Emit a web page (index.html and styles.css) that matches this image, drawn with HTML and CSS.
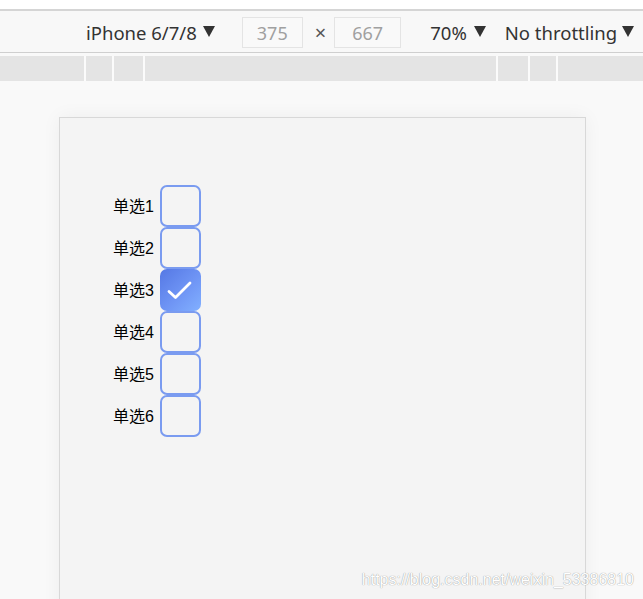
FILE: index.html
```html
<!DOCTYPE html>
<html>
<head>
<meta charset="utf-8">
<link rel="stylesheet" href="styles.css">
</head>
<body>
<div class="topstrip"></div>
<div class="toolbar">
  <span class="device">iPhone 6/7/8</span>
  <svg class="caret" width="12" height="11" viewBox="0 0 12 11"><path d="M0 0 H12 L6 11 Z" fill="#333"/></svg>
  <span class="dim">375</span>
  <span class="times">×</span>
  <span class="dim dim2">667</span>
  <span class="zoom">70%</span>
  <svg class="caret" width="12" height="11" viewBox="0 0 12 11"><path d="M0 0 H12 L6 11 Z" fill="#333"/></svg>
  <span class="throttle">No throttling</span>
  <svg class="caret" width="12" height="11" viewBox="0 0 12 11"><path d="M0 0 H12 L6 11 Z" fill="#333"/></svg>
</div>
<div class="ruler">
  <div class="seg" style="width:84px"></div>
  <div class="seg" style="width:26px"></div>
  <div class="seg" style="width:29px"></div>
  <div class="seg" style="width:351px"></div>
  <div class="seg" style="width:30px"></div>
  <div class="seg" style="width:26px"></div>
  <div class="seg grow"></div>
</div>
<div class="stage">
  <div class="frame">
    <div class="list">
      <div class="row"><span class="label">单选1</span><span class="box"></span></div>
      <div class="row"><span class="label">单选2</span><span class="box"></span></div>
      <div class="row"><span class="label">单选3</span><span class="box checked"><svg width="41" height="41" viewBox="0 0 41 41"><path d="M9 21.5 L15.5 27.5 L30 13" fill="none" stroke="#fff" stroke-width="2.8" stroke-linecap="round" stroke-linejoin="round"/></svg></span></div>
      <div class="row"><span class="label">单选4</span><span class="box"></span></div>
      <div class="row"><span class="label">单选5</span><span class="box"></span></div>
      <div class="row"><span class="label">单选6</span><span class="box"></span></div>
    </div>
  </div>
</div>
<div class="watermark">https://blog.csdn.net/weixin_53386810</div>
</body>
</html>
```
FILE: styles.css
```css
* { box-sizing: border-box; }
html, body { margin: 0; padding: 0; }
body {
  width: 643px;
  height: 599px;
  overflow: hidden;
  background: #f9f9f9;
  font-family: "Noto Sans", "Liberation Sans", sans-serif;
  position: relative;
}
.topstrip {
  height: 11px;
  background: #ffffff;
  border-bottom: 2px solid #d5d5d5;
}
.toolbar {
  height: 42px;
  background: #f8f8f8;
  border-bottom: 1px solid #cfcfcf;
  display: flex;
  align-items: center;
  font-size: 18.5px;
  color: #333;
  padding-left: 86px;
  padding-top: 2px;
  white-space: nowrap;
}
.caret { display: block; flex: none; margin-top: -2px; }
.device { margin-right: 6px; }
.dim {
  width: 61px;
  height: 31px;
  border: 1px solid #e4e4e4;
  background: #f9f9f9;
  color: #a0a0a0;
  display: flex;
  align-items: center;
  justify-content: center;
  font-size: 18px;
  margin-left: 27px;
}
.dim2 { width: 67px; margin-left: 0; }
.times { margin: 0 8px 0 12px; color: #555; font-size: 20px; }
.zoom { margin-left: 29px; margin-right: 7px; }
.throttle { margin-left: 19px; margin-right: 5px; }
.ruler {
  margin-top: 3px;
  height: 25px;
  display: flex;
  gap: 2px;
  background: #fbfbfb;
}
.seg { background: #e4e4e4; height: 25px; }
.grow { flex: 1; }
.stage {
  padding-top: 36px;
  padding-left: 59px;
}
.frame {
  width: 527px;
  height: 500px;
  background: #f4f4f4;
  border: 1px solid #d8d8d8;
  border-bottom: none;
  box-shadow: 0 0 18px rgba(0, 0, 0, 0.05);
  padding-top: 67px;
  padding-left: 40px;
}
.list { display: flex; flex-direction: column; }
.row {
  display: flex;
  align-items: center;
  height: 42px;
}
.label {
  width: 55px;
  text-align: right;
  padding-right: 1px;
  margin-right: 5px;
  margin-top: -2px;
  font-family: "Liberation Sans", "Noto Sans CJK SC", sans-serif;
  font-size: 16px;
  color: #000;
}
.box {
  width: 41px;
  height: 42px;
  border: 2px solid #7a9bf0;
  border-radius: 7px;
  background: #f4f4f4;
  display: flex;
  align-items: center;
  justify-content: center;
}
.box.checked {
  border: none;
  background: linear-gradient(135deg, #5578e4 0%, #6f95f5 55%, #82b0ff 100%);
}
.box svg { display: block; }
.watermark {
  position: absolute;
  right: 9px;
  bottom: 10px;
  font-family: "Liberation Sans", sans-serif;
  font-size: 16px;
  color: #ffffff;
  text-shadow: 0 0 1px rgba(0,0,0,0.35), 0 0 1px rgba(0,0,0,0.2);
}
```
